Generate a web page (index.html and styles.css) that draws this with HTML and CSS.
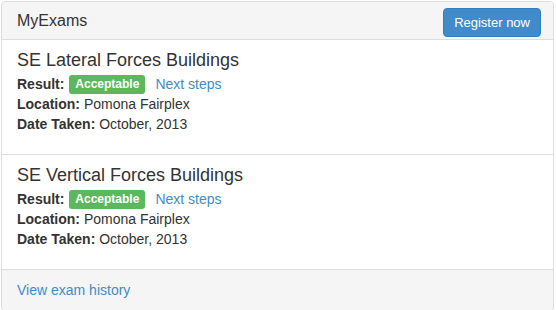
FILE: index.html
```html
<!DOCTYPE html>
<html>
<head>
<meta charset="utf-8">
<link rel="stylesheet" href="styles.css">
</head>
<body>
<div class="panel">
  <div class="panel-heading">
    <span class="panel-title">MyExams</span>
    <a class="btn" href="#">Register now</a>
  </div>
  <div class="item">
    <h4 class="item-title">SE Lateral Forces Buildings</h4>
    <p class="item-body">
      <b>Result:</b> <span class="label">Acceptable</span><a class="link" href="#">Next steps</a><br>
      <b>Location:</b> Pomona Fairplex<br>
      <b>Date Taken:</b> October, 2013
    </p>
  </div>
  <div class="item">
    <h4 class="item-title">SE Vertical Forces Buildings</h4>
    <p class="item-body">
      <b>Result:</b> <span class="label">Acceptable</span><a class="link" href="#">Next steps</a><br>
      <b>Location:</b> Pomona Fairplex<br>
      <b>Date Taken:</b> October, 2013
    </p>
  </div>
  <div class="panel-footer">
    <a class="link" href="#">View exam history</a>
  </div>
</div>
</body>
</html>
```
FILE: styles.css
```css
* { box-sizing: border-box; }
html, body { margin: 0; padding: 0; background: #fff; }
body {
  font-family: "Liberation Sans", Arial, sans-serif;
  font-size: 14px;
  line-height: 20px;
  color: #333;
}
.panel {
  margin: 1px 0 0 1px;
  width: 553px;
  border: 1px solid #ddd;
  border-radius: 4px;
  background: #fff;
}
.panel-heading {
  height: 38px;
  display: flex;
  align-items: center;
  justify-content: space-between;
  padding: 0 12px 0 15px;
  background: #f5f5f5;
  border-bottom: 1px solid #ddd;
  border-radius: 3px 3px 0 0;
}
.panel-title {
  font-size: 16px;
  color: #333;
}
.btn {
  display: inline-block;
  margin-top: 3px;
  height: 29px;
  padding: 0 10px;
  line-height: 28px;
  font-size: 13px;
  color: #fff;
  text-decoration: none;
  background: #428bca;
  border: 1px solid #357ebd;
  border-radius: 4px;
}
.item {
  padding: 10px 15px;
  border-bottom: 1px solid #ddd;
}
.item-title {
  margin: 0 0 4px 0;
  font-size: 18px;
  font-weight: normal;
  line-height: 20px;
  color: #333;
}
.item-body {
  margin: 0 0 10px 0;
}
.item-body b { font-weight: bold; }
.label {
  display: inline-block;
  vertical-align: 1px;
  height: 19px;
  padding: 0 6px;
  line-height: 19px;
  font-size: 12px;
  font-weight: bold;
  color: #fff;
  background: #5cb85c;
  border-radius: 3px;
  margin-left: 1px;
  margin-right: 10px;
}
.link {
  color: #428bca;
  text-decoration: none;
}
.panel-footer {
  padding: 10px 15px;
  background: #f5f5f5;
  border-radius: 0 0 3px 3px;
}
```
